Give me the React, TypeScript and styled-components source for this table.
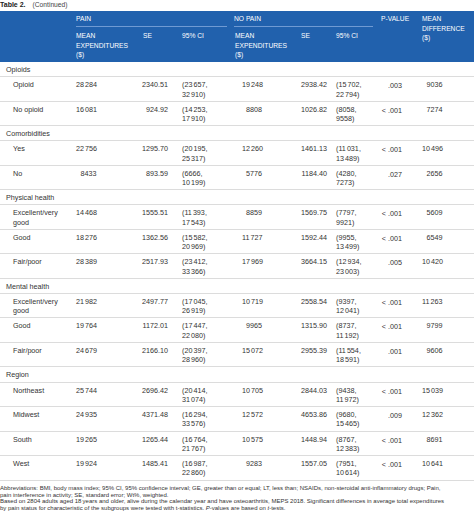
import React from 'react';
import { styled, createGlobalStyle } from 'styled-components';

const GlobalStyle = createGlobalStyle`
  html, body {
    margin: 0;
    padding: 0;
    background: #fff;
  }
  body {
    font-family: 'Liberation Sans', Arial, Helvetica, sans-serif;
    color: #333;
  }
`;

type Row = {
  label: string;
  painMean: string;
  painSe: string;
  painCi: [string, string];
  noMean: string;
  noSe: string;
  noCi: [string, string];
  p: string;
  diff: string;
};

type Group = { title: string; rows: Row[] };

const r = (
  label: string,
  painMean: string,
  painSe: string,
  painLo: string,
  painHi: string,
  noMean: string,
  noSe: string,
  noLo: string,
  noHi: string,
  p: string,
  diff: string
): Row => ({
  label,
  painMean,
  painSe,
  painCi: [painLo, painHi],
  noMean,
  noSe,
  noCi: [noLo, noHi],
  p,
  diff,
});

const LT = '<.001';

const groups: Group[] = [
  {
    title: 'Opioids',
    rows: [
      r('Opioid', '28284', '2340.51', '23657', '32910', '19248', '2938.42', '15702', '22794', '.003', '9036'),
      r('No opioid', '16081', '924.92', '14253', '17910', '8808', '1026.82', '8058', '9558', LT, '7274'),
    ],
  },
  {
    title: 'Comorbidities',
    rows: [
      r('Yes', '22756', '1295.70', '20195', '25317', '12260', '1461.13', '11031', '13489', LT, '10496'),
      r('No', '8433', '893.59', '6666', '10199', '5776', '1184.40', '4280', '7273', '.027', '2656'),
    ],
  },
  {
    title: 'Physical health',
    rows: [
      r('Excellent/very good', '14468', '1555.51', '11393', '17543', '8859', '1569.75', '7797', '9921', LT, '5609'),
      r('Good', '18276', '1362.56', '15582', '20969', '11727', '1592.44', '9955', '13499', LT, '6549'),
      r('Fair/poor', '28389', '2517.93', '23412', '33366', '17969', '3664.15', '12934', '23003', '.005', '10420'),
    ],
  },
  {
    title: 'Mental health',
    rows: [
      r('Excellent/very good', '21982', '2497.77', '17045', '26919', '10719', '2558.54', '9397', '12041', LT, '11263'),
      r('Good', '19764', '1172.01', '17447', '22080', '9965', '1315.90', '8737', '11192', LT, '9799'),
      r('Fair/poor', '24679', '2166.10', '20397', '28960', '15072', '2955.39', '11554', '18591', '.001', '9606'),
    ],
  },
  {
    title: 'Region',
    rows: [
      r('Northeast', '25744', '2696.42', '20414', '31074', '10705', '2844.03', '9438', '11972', LT, '15039'),
      r('Midwest', '24935', '4371.48', '16294', '33576', '12572', '4653.86', '9680', '15465', '.009', '12362'),
      r('South', '19265', '1265.44', '16764', '21767', '10575', '1448.94', '8767', '12383', LT, '8691'),
      r('West', '19924', '1485.41', '16987', '22860', '9283', '1557.05', '7951', '10614', LT, '10641'),
    ],
  },
];

// journal style: a narrow gap as thousands separator from 5 digits on
const Fig = ({ n }: { n: string }) =>
  /^\d{5,}$/.test(n) ? (
    <>
      {n.slice(0, -3)}
      <Styled.Thou>{n.slice(-3)}</Styled.Thou>
    </>
  ) : (
    <>{n}</>
  );

const PVal = ({ p }: { p: string }) =>
  p.startsWith('<') ? (
    <>
      <Styled.Lt>&lt;</Styled.Lt>
      {p.slice(1)}
    </>
  ) : (
    <>{p}</>
  );

const colWidths = [72, 64, 42, 52, 66, 36, 45, 41, 56];

export default function App() {
  return (
    <Styled.Page>
      <GlobalStyle />
      <Styled.Caption>
        <b>Table 2.</b>
        <span>(Continued)</span>
      </Styled.Caption>

      <Styled.Table>
        <colgroup>
          {colWidths.map((w, i) => (
            <col key={i} style={{ width: w }} />
          ))}
        </colgroup>
        <thead>
          <tr>
            <Styled.Th rowSpan={2} />
            <Styled.SpanTh colSpan={3} $pl={4} $pr={3}>
              <Styled.SpanLabel>PAIN</Styled.SpanLabel>
            </Styled.SpanTh>
            <Styled.SpanTh colSpan={3} $pl={4} $pr={4}>
              <Styled.SpanLabel>NO PAIN</Styled.SpanLabel>
            </Styled.SpanTh>
            <Styled.Th rowSpan={2} $pl={4} $top={3.3}>
              P-VALUE
            </Styled.Th>
            <Styled.Th rowSpan={2} $pl={4} $top={3.3}>
              MEAN DIFFERENCE ($)
            </Styled.Th>
          </tr>
          <tr>
            <Styled.Th $pl={4}>MEAN EXPENDITURES ($)</Styled.Th>
            <Styled.Th $pl={7}>SE</Styled.Th>
            <Styled.Th $pl={4}>95% CI</Styled.Th>
            <Styled.Th $pl={5}>MEAN EXPENDITURES ($)</Styled.Th>
            <Styled.Th $pl={5}>SE</Styled.Th>
            <Styled.Th $pl={4}>95% CI</Styled.Th>
          </tr>
        </thead>
        <tbody>
          {groups.map((g) => (
            <React.Fragment key={g.title}>
              <Styled.BodyRow>
                <Styled.Label colSpan={9} $indent={6}>
                  {g.title}
                </Styled.Label>
              </Styled.BodyRow>
              {g.rows.map((row, i) => (
                <Styled.BodyRow key={i}>
                  <Styled.Label $indent={13}>{row.label}</Styled.Label>
                  <Styled.Td $pl={4}>
                    <Styled.Num $w={20.5}>
                      <Fig n={row.painMean} />
                    </Styled.Num>
                  </Styled.Td>
                  <Styled.Td $align="right" $pr={10}>
                    {row.painSe}
                  </Styled.Td>
                  <Styled.Td $pl={4}>
                    (<Fig n={row.painCi[0]} />,
                    <br />
                    <Fig n={row.painCi[1]} />)
                  </Styled.Td>
                  <Styled.Td $pl={12}>
                    <Styled.Num $w={20}>
                      <Fig n={row.noMean} />
                    </Styled.Num>
                  </Styled.Td>
                  <Styled.Td $align="right" $pr={5}>
                    {row.noSe}
                  </Styled.Td>
                  <Styled.Td $pl={4}>
                    (<Fig n={row.noCi[0]} />,
                    <br />
                    <Fig n={row.noCi[1]} />)
                  </Styled.Td>
                  <Styled.Td $align="right" $pr={16} $top={4}>
                    <PVal p={row.p} />
                  </Styled.Td>
                  <Styled.Td $pl={4}>
                    <Styled.Num $w={20.5}>
                      <Fig n={row.diff} />
                    </Styled.Num>
                  </Styled.Td>
                </Styled.BodyRow>
              ))}
            </React.Fragment>
          ))}
        </tbody>
      </Styled.Table>

      <Styled.Notes>
        <p>
          Abbreviations: BMI, body mass index; 95% CI, 95% confidence interval; GE, greater than or equal; LT, less
          than; NSAIDs, non-steroidal anti-inflammatory drugs; Pain,
          <br />
          pain interference in activity; SE, standard error; Wt%, weighted.
        </p>
        <p>
          Based on 2804 adults aged 18{'\u2009'}years and older, alive during the calendar year and have osteoarthritis,
          MEPS 2018. Significant differences in average total expenditures
          <br />
          by pain status for characteristic of the subgroups were tested with t-statistics. <i>P</i>-values are based on{' '}
          <i>t</i>-tests.
        </p>
      </Styled.Notes>
    </Styled.Page>
  );
}

const Styled = {
  Page: styled.div`
    width: 474px;
    overflow: hidden;
  `,

  Caption: styled.div`
    display: flex;
    align-items: baseline;
    gap: 7px;
    height: 11px;
    font-size: 7px;
    line-height: 10px;
    color: #222;

    span {
      font-size: 6.7px;
      color: #444;
    }
  `,

  Table: styled.table`
    width: 474px;
    table-layout: fixed;
    border-collapse: collapse;
    border-spacing: 0;

    thead {
      background: #2161ad;
    }
  `,

  Th: styled.th<{ $pl?: number; $top?: number }>`
    padding: ${(p) => p.$top ?? 4.2}px 3px 2.3px ${(p) => p.$pl ?? 0}px;
    vertical-align: top;
    text-align: left;
    font-weight: normal;
    font-size: 6.7px;
    line-height: 9.5px;
    color: #fff;
  `,

  SpanTh: styled.th<{ $pl: number; $pr: number }>`
    padding: 0 ${(p) => p.$pr}px 0 ${(p) => p.$pl}px;
    text-align: left;
    font-weight: normal;
    font-size: 6.7px;
    line-height: 9.5px;
    color: #fff;
  `,

  SpanLabel: styled.div`
    padding: 3.3px 0 2.3px;
    border-bottom: 1px solid #6f9ad3;
  `,

  BodyRow: styled.tr`
    border-bottom: 1px solid #dcdcdc;
  `,

  Label: styled.td<{ $indent: number }>`
    padding: 3px 4px 1.7px ${(p) => p.$indent}px;
    vertical-align: top;
    font-size: 7.2px;
    line-height: 9.4px;
    color: #333;
  `,

  Td: styled.td<{ $align?: 'left' | 'right'; $pl?: number; $pr?: number; $top?: number }>`
    padding: ${(p) => p.$top ?? 3}px ${(p) => p.$pr ?? 0}px 1.7px ${(p) => p.$pl ?? 0}px;
    vertical-align: top;
    text-align: ${(p) => p.$align ?? 'left'};
    font-size: 7.2px;
    line-height: 9.4px;
    color: #333;
    white-space: nowrap;
  `,

  Num: styled.span<{ $w: number }>`
    display: inline-block;
    width: ${(p) => p.$w}px;
    text-align: right;
  `,

  Thou: styled.span`
    margin-left: 1px;
  `,

  Lt: styled.span`
    margin-right: 2px;
  `,

  Notes: styled.div`
    padding-top: 4.5px;
    font-size: 6px;
    line-height: 6.7px;
    color: #333;

    p {
      margin: 0;
      white-space: nowrap;
    }
  `,
};
